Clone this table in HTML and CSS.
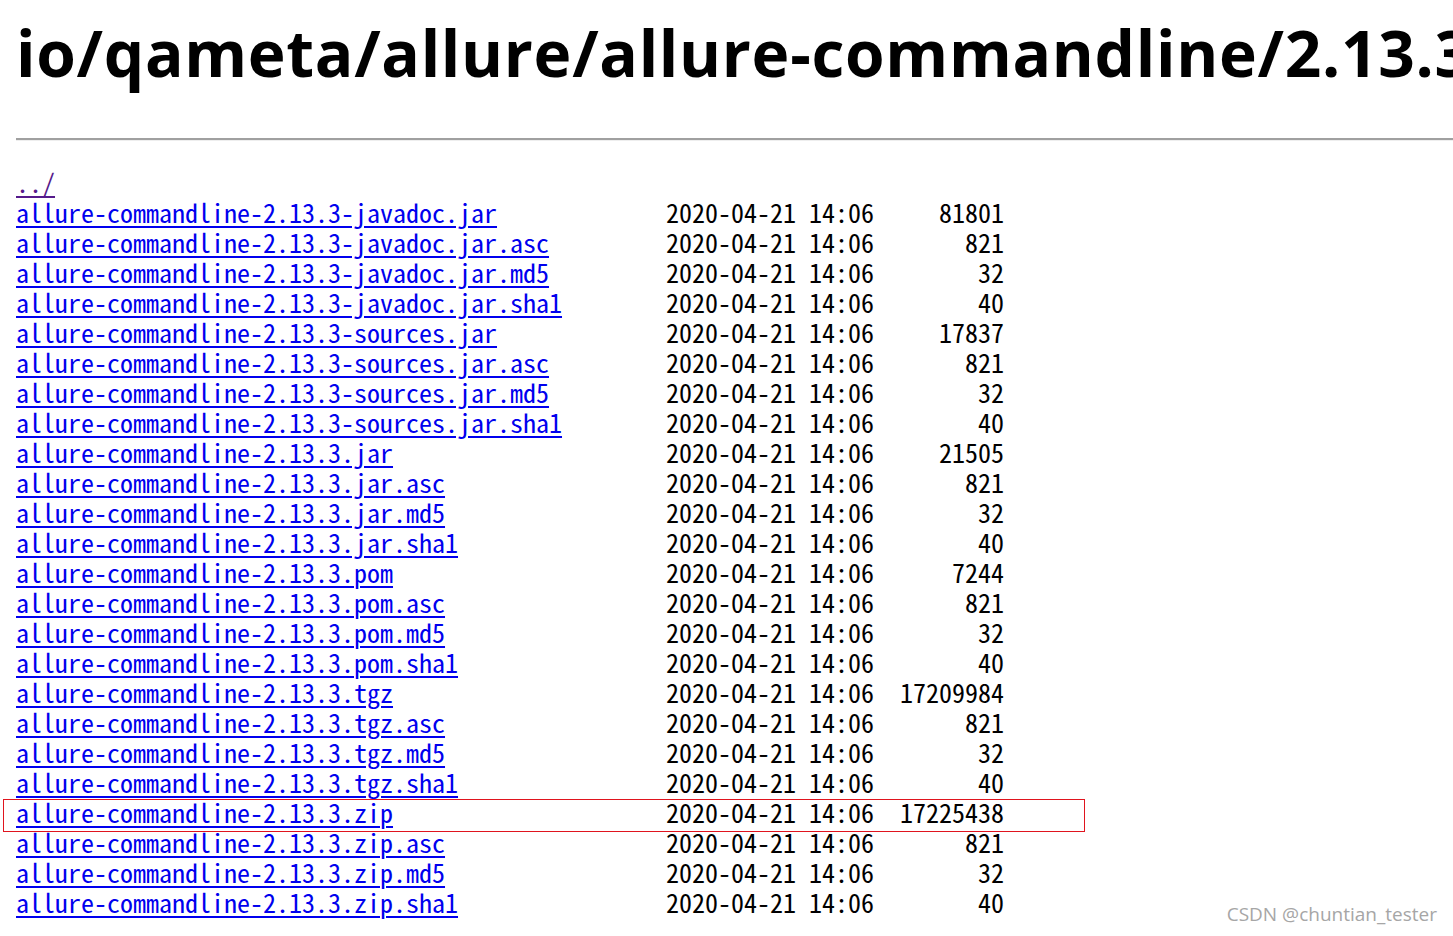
FILE: index.html
```html
<!DOCTYPE html>
<html>
<head>
<meta charset="utf-8">
<title>Index of /io/qameta/allure/allure-commandline/2.13.3</title>
<link rel="stylesheet" href="styles.css">
</head>
<body>
<div class="page">
  <h1 class="title">io/qameta/allure/allure-commandline/2.13.3</h1>
  <hr class="rule">
  <div class="listing">
    <div class="row"><a class="name visited" href="#">../</a></div>
    <div class="row"><span class="name"><a href="#">allure-commandline-2.13.3-javadoc.jar</a></span><span class="date">2020-04-21 14:06</span><span class="size">81801</span></div>
    <div class="row"><span class="name"><a href="#">allure-commandline-2.13.3-javadoc.jar.asc</a></span><span class="date">2020-04-21 14:06</span><span class="size">821</span></div>
    <div class="row"><span class="name"><a href="#">allure-commandline-2.13.3-javadoc.jar.md5</a></span><span class="date">2020-04-21 14:06</span><span class="size">32</span></div>
    <div class="row"><span class="name"><a href="#">allure-commandline-2.13.3-javadoc.jar.sha1</a></span><span class="date">2020-04-21 14:06</span><span class="size">40</span></div>
    <div class="row"><span class="name"><a href="#">allure-commandline-2.13.3-sources.jar</a></span><span class="date">2020-04-21 14:06</span><span class="size">17837</span></div>
    <div class="row"><span class="name"><a href="#">allure-commandline-2.13.3-sources.jar.asc</a></span><span class="date">2020-04-21 14:06</span><span class="size">821</span></div>
    <div class="row"><span class="name"><a href="#">allure-commandline-2.13.3-sources.jar.md5</a></span><span class="date">2020-04-21 14:06</span><span class="size">32</span></div>
    <div class="row"><span class="name"><a href="#">allure-commandline-2.13.3-sources.jar.sha1</a></span><span class="date">2020-04-21 14:06</span><span class="size">40</span></div>
    <div class="row"><span class="name"><a href="#">allure-commandline-2.13.3.jar</a></span><span class="date">2020-04-21 14:06</span><span class="size">21505</span></div>
    <div class="row"><span class="name"><a href="#">allure-commandline-2.13.3.jar.asc</a></span><span class="date">2020-04-21 14:06</span><span class="size">821</span></div>
    <div class="row"><span class="name"><a href="#">allure-commandline-2.13.3.jar.md5</a></span><span class="date">2020-04-21 14:06</span><span class="size">32</span></div>
    <div class="row"><span class="name"><a href="#">allure-commandline-2.13.3.jar.sha1</a></span><span class="date">2020-04-21 14:06</span><span class="size">40</span></div>
    <div class="row"><span class="name"><a href="#">allure-commandline-2.13.3.pom</a></span><span class="date">2020-04-21 14:06</span><span class="size">7244</span></div>
    <div class="row"><span class="name"><a href="#">allure-commandline-2.13.3.pom.asc</a></span><span class="date">2020-04-21 14:06</span><span class="size">821</span></div>
    <div class="row"><span class="name"><a href="#">allure-commandline-2.13.3.pom.md5</a></span><span class="date">2020-04-21 14:06</span><span class="size">32</span></div>
    <div class="row"><span class="name"><a href="#">allure-commandline-2.13.3.pom.sha1</a></span><span class="date">2020-04-21 14:06</span><span class="size">40</span></div>
    <div class="row"><span class="name"><a href="#">allure-commandline-2.13.3.tgz</a></span><span class="date">2020-04-21 14:06</span><span class="size">17209984</span></div>
    <div class="row"><span class="name"><a href="#">allure-commandline-2.13.3.tgz.asc</a></span><span class="date">2020-04-21 14:06</span><span class="size">821</span></div>
    <div class="row"><span class="name"><a href="#">allure-commandline-2.13.3.tgz.md5</a></span><span class="date">2020-04-21 14:06</span><span class="size">32</span></div>
    <div class="row"><span class="name"><a href="#">allure-commandline-2.13.3.tgz.sha1</a></span><span class="date">2020-04-21 14:06</span><span class="size">40</span></div>
    <div class="row highlighted"><span class="name"><a href="#">allure-commandline-2.13.3.zip</a></span><span class="date">2020-04-21 14:06</span><span class="size">17225438</span><span class="mark"></span></div>
    <div class="row"><span class="name"><a href="#">allure-commandline-2.13.3.zip.asc</a></span><span class="date">2020-04-21 14:06</span><span class="size">821</span></div>
    <div class="row"><span class="name"><a href="#">allure-commandline-2.13.3.zip.md5</a></span><span class="date">2020-04-21 14:06</span><span class="size">32</span></div>
    <div class="row"><span class="name"><a href="#">allure-commandline-2.13.3.zip.sha1</a></span><span class="date">2020-04-21 14:06</span><span class="size">40</span></div>
  </div>
</div>
<div class="watermark">CSDN @chuntian_tester</div>
</body>
</html>
```
FILE: styles.css
```css
html, body {
  margin: 0;
  padding: 0;
  background: #ffffff;
  overflow: hidden;
}

.page {
  padding-left: 16px;
  width: 1437px;
  height: 936px;
  overflow: hidden;
}

.title {
  margin: 21px 0 0;
  font-family: "Open Sans", "Noto Sans", sans-serif;
  font-weight: 700;
  font-size: 64px;
  line-height: 64px;
  color: #000000;
  white-space: nowrap;
  letter-spacing: 0.7px;
}

.rule {
  margin: 53px 0 0;
  height: 0;
  border: 0;
  border-top: 2px solid #a0a0a0;
  border-bottom: 1px solid #eeeeee;
}

.listing {
  margin-top: 29px;
  font-family: "Noto Sans Mono CJK SC", "Liberation Mono", monospace;
  font-size: 26px;
  line-height: 24px;
  color: #000000;
}

.row {
  display: flex;
  align-items: flex-start;
  height: 30px;
  position: relative;
  white-space: pre;
}

.name {
  width: 650px;
  flex: none;
}

.listing a {
  color: #0000ee;
  text-decoration: underline;
  text-decoration-thickness: 2px;
  text-underline-offset: 3px;
}

.listing a.visited {
  color: #551a8b;
}

.date {
  width: 208px;
  flex: none;
}

.size {
  width: 130px;
  flex: none;
  text-align: right;
}

.mark {
  position: absolute;
  left: -13px;
  top: -1px;
  width: 1080px;
  height: 31px;
  border: 1px solid #e0141e;
  pointer-events: none;
}

.watermark {
  position: absolute;
  right: 16px;
  bottom: 9px;
  font-family: "Open Sans", "Noto Sans", sans-serif;
  font-size: 19px;
  color: #a6a6a6;
}
```
